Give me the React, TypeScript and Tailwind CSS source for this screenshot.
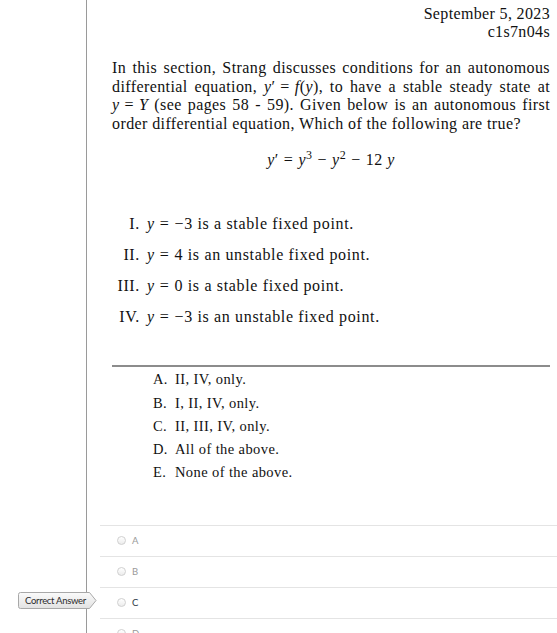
import React from "react";

const serif = { fontFamily: '"Liberation Serif", "Times New Roman", serif' };

const statements = [
  { label: "I.", value: "−3", rest: "is a stable fixed point." },
  { label: "II.", value: "4", rest: "is an unstable fixed point." },
  { label: "III.", value: "0", rest: "is a stable fixed point." },
  { label: "IV.", value: "−3", rest: "is an unstable fixed point." },
];

const choices = [
  { label: "A.", text: "II, IV, only." },
  { label: "B.", text: "I, II, IV, only." },
  { label: "C.", text: "II, III, IV, only." },
  { label: "D.", text: "All of the above." },
  { label: "E.", text: "None of the above." },
];

const answers = ["A", "B", "C", "D", "E"];

// math operator with a bit more room, like TeX
function Op({ children }: { children: React.ReactNode }) {
  return <span className="mx-[5px]">{children}</span>;
}

function CorrectBadge() {
  return (
    <div className="absolute left-[-82px] top-[4px] h-[17px] w-[79px]">
      <svg className="absolute inset-0" width="79" height="17" viewBox="0 0 79 17">
        <defs>
          <linearGradient id="badge" x1="0" y1="0" x2="0" y2="1">
            <stop offset="0" stopColor="#fbfbfb" />
            <stop offset="1" stopColor="#e2e2e2" />
          </linearGradient>
        </defs>
        <path
          d="M0.5 2.5 Q0.5 0.5 2.5 0.5 H71.5 L78 8.5 L71.5 16.5 H2.5 Q0.5 16.5 0.5 14.5 Z"
          fill="url(#badge)"
          stroke="#a8a8a8"
        />
      </svg>
      <span
        className="relative block pl-[7px] text-[9.5px] leading-[17px] tracking-[-0.3px] text-[#2b2b2b]"
        style={{ fontFamily: "Lato, sans-serif" }}
      >
        Correct Answer
      </span>
    </div>
  );
}

export default function App() {
  return (
    <div className="flex h-[633px] w-full overflow-hidden bg-white text-[#111]">
      <div className="w-[87px] shrink-0 border-r border-[#9a9a9a]" />
      <div className="flex-1">
        <div className="pl-[25px] pr-[7px]" style={serif}>
          <div className="pt-[5px] text-right text-[16px] leading-[18px] tracking-[0.35px]">
            <p>September 5, 2023</p>
            <p>c1s7n04s</p>
          </div>

          <div className="mt-[18px] text-[16px] leading-[18.5px] tracking-[0.4px]">
            <p className="text-justify [text-align-last:justify]">
              In this section, Strang discusses conditions for an autonomous
            </p>
            <p className="text-justify [text-align-last:justify]">
              differential equation, <i>y</i>′<Op>=</Op><i>f</i>(<i>y</i>), to have a stable steady state at
            </p>
            <p className="text-justify [text-align-last:justify]">
              <i>y</i>
              <Op>=</Op>
              <i>Y</i> (see pages 58 - 59). Given below is an autonomous first
            </p>
            <p>order differential equation, Which of the following are true?</p>
          </div>

          <p className="mt-[18px] text-center text-[16px] leading-[18px] tracking-[0.5px]">
            <i>y</i>′<Op>=</Op>
            <i>y</i>
            <sup>3</sup>
            <Op>−</Op>
            <i>y</i>
            <sup>2</sup>
            <Op>−</Op>12 <i>y</i>
          </p>

          <div className="mt-[39px] text-[16px] tracking-[0.65px]">
            {statements.map((s) => (
              <div key={s.label} className="flex h-[31px] items-center">
                <span className="w-[28px] text-right">{s.label}</span>
                <span className="ml-[7px]">
                  <i>y</i>
                  <Op>=</Op>
                  {s.value} {s.rest}
                </span>
              </div>
            ))}
          </div>

          <div className="mt-[33px] h-[2px] bg-[#8c8c8c]" />

          <div className="mt-[1.5px] text-[14.5px] tracking-[0.4px]">
            {choices.map((c) => (
              <div key={c.label} className="flex h-[23.25px] items-center pl-[41px]">
                <span className="w-[22px]">{c.label}</span>
                <span>{c.text}</span>
              </div>
            ))}
          </div>
        </div>

        <div className="ml-[13px] mt-[40px]" style={{ fontFamily: "Lato, sans-serif" }}>
          {answers.map((a) => (
            <div key={a} className="relative flex h-[31px] items-center border-t border-[#e4e4e4] pl-[17px]">
              {a === "C" ? <CorrectBadge /> : null}
              <span className="h-[9px] w-[9px] rounded-full border border-[#d0d0d0] bg-gradient-to-b from-white to-[#ececec]" />
              <span className={`ml-[6px] text-[9.5px] ${a === "C" ? "text-[#2d3b45]" : "text-[#9a9a9a]"}`}>{a}</span>
            </div>
          ))}
        </div>
      </div>
    </div>
  );
}
